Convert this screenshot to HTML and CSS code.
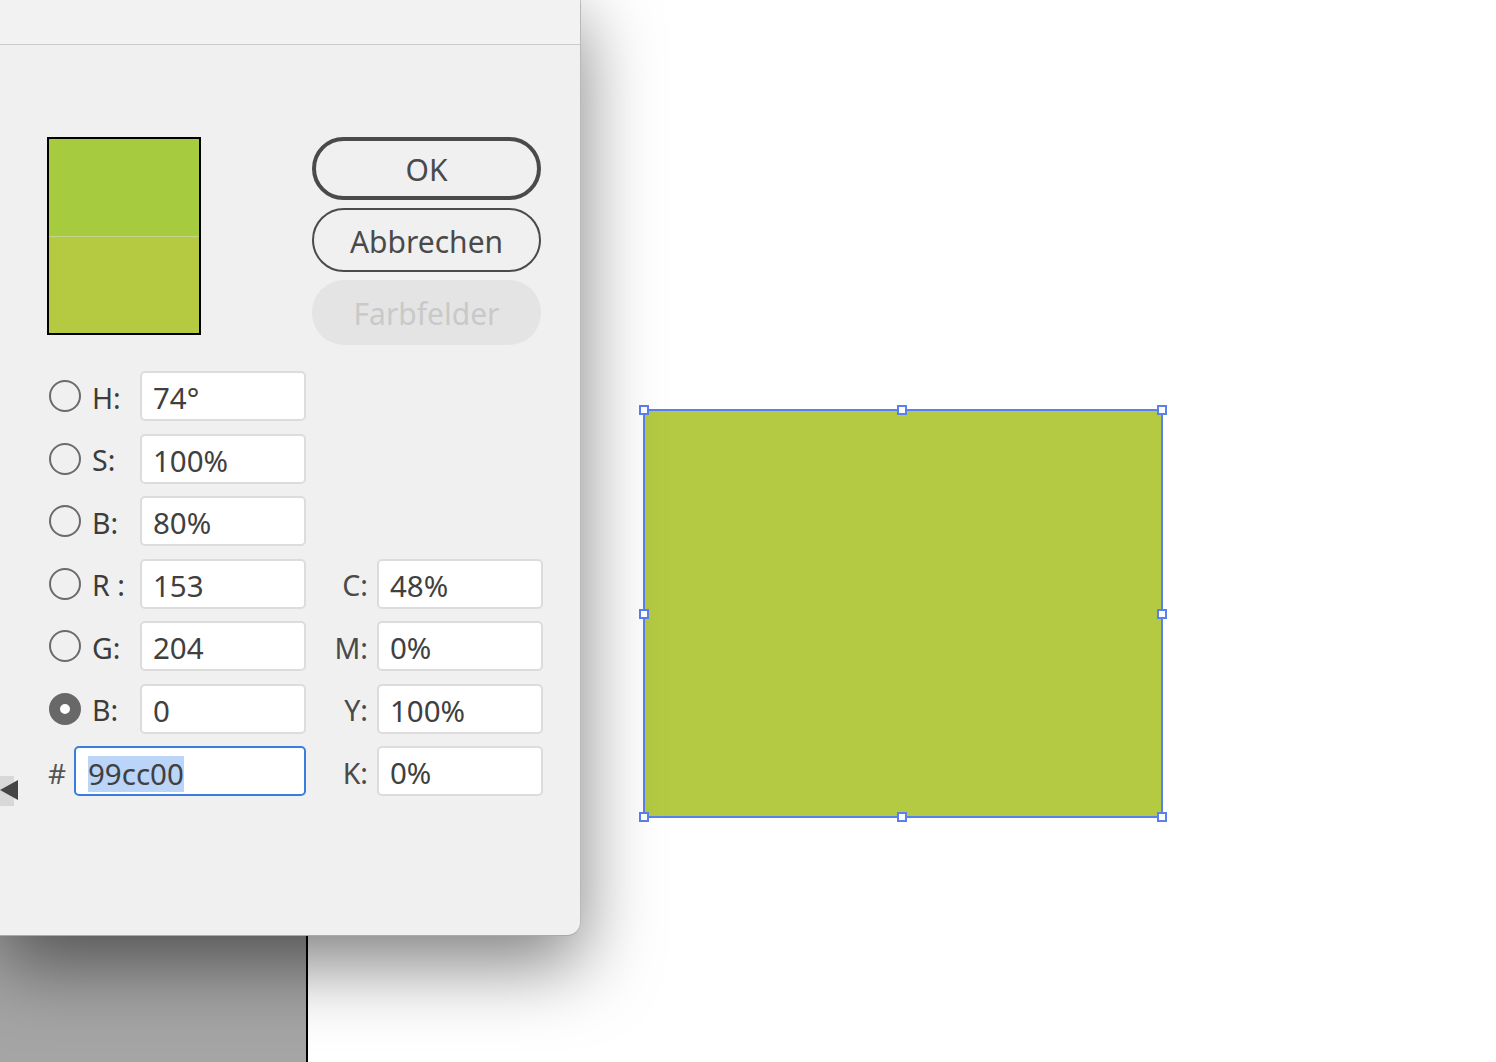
FILE: index.html
```html
<!DOCTYPE html>
<html lang="de">
<head>
<meta charset="utf-8">
<title>Farbwähler</title>
<link rel="stylesheet" href="styles.css">
</head>
<body>
<div class="side-panel"></div>
<div class="canvas">
  <div class="shape">
    <span class="handle h-tl"></span><span class="handle h-tm"></span><span class="handle h-tr"></span>
    <span class="handle h-ml"></span><span class="handle h-mr"></span>
    <span class="handle h-bl"></span><span class="handle h-bm"></span><span class="handle h-br"></span>
  </div>
</div>

<div class="dialog">
  <div class="dialog-header"></div>
  <div class="dialog-body">
    <div class="top-row">
      <div class="swatch">
        <div class="swatch-new"></div>
        <div class="swatch-old"></div>
      </div>
      <div class="buttons">
        <div class="btn btn-default">OK</div>
        <div class="btn">Abbrechen</div>
        <div class="btn btn-disabled">Farbfelder</div>
      </div>
    </div>

    <div class="form">
      <span class="radio"></span><span class="label">H:</span><div class="field">74°</div><span></span><span></span>
      <span class="radio"></span><span class="label">S:</span><div class="field">100%</div><span></span><span></span>
      <span class="radio"></span><span class="label">B:</span><div class="field">80%</div><span></span><span></span>
      <span class="radio"></span><span class="label">R :</span><div class="field">153</div><span class="label2">C:</span><div class="field">48%</div>
      <span class="radio"></span><span class="label">G:</span><div class="field">204</div><span class="label2">M:</span><div class="field">0%</div>
      <span class="radio radio-on"></span><span class="label">B:</span><div class="field">0</div><span class="label2">Y:</span><div class="field">100%</div>
      <div class="hex-row"><span class="hash">#</span><div class="field field-focus"><span class="sel">99cc00</span></div></div><span class="label2">K:</span><div class="field">0%</div>
    </div>
  </div>
  <div class="side-arrow">
    <svg width="18" height="30" viewBox="0 0 18 30"><rect x="0" y="0" width="14" height="30" fill="#d8d8d8"/><path d="M0 14 L18 4 L18 24 Z" fill="#454545"/></svg>
  </div>
</div>
</body>
</html>
```

FILE: styles.css
```css
html, body {
  margin: 0;
  padding: 0;
}
body {
  width: 1496px;
  height: 1062px;
  overflow: hidden;
  display: flex;
  position: relative;
  font-family: "Noto Sans", "Open Sans", sans-serif;
  background: #fff;
}
.side-panel {
  width: 306px;
  flex: none;
  background: #a5a5a5;
  border-right: 2px solid #000;
}
.canvas {
  flex: 1;
  position: relative;
  background: #fff;
}
.shape {
  position: absolute;
  left: 335px;
  top: 409px;
  width: 516px;
  height: 405px;
  background: #b4ca42;
  border: 2px solid #5a80f0;
}
.handle {
  position: absolute;
  width: 6px;
  height: 6px;
  background: #fff;
  border: 2px solid #5a80f0;
}
.h-tl { left: -6px; top: -6px; }
.h-tm { left: 252px; top: -6px; }
.h-tr { right: -6px; top: -6px; }
.h-ml { left: -6px; top: 198px; }
.h-mr { right: -6px; top: 198px; }
.h-bl { left: -6px; bottom: -6px; }
.h-bm { left: 252px; bottom: -6px; }
.h-br { right: -6px; bottom: -6px; }

.dialog {
  position: absolute;
  left: 0;
  top: -10px;
  width: 580px;
  height: 945px;
  background: #f0f0f0;
  border-right: 1px solid #b9b9b9;
  border-bottom: 1px solid #a9a9a9;
  border-radius: 0 14px 14px 0;
  box-shadow: 0 28px 75px rgba(0,0,0,0.5);
}
.dialog-header {
  height: 54px;
  background: #f2f2f2;
  border-bottom: 1px solid #cbcbcb;
  border-radius: 0 14px 0 0;
}
.dialog-body {
  padding: 92px 0 0 47px;
}
.top-row {
  display: flex;
  align-items: flex-start;
}
.swatch {
  width: 154px;
  height: 198px;
  box-sizing: border-box;
  border: 2px solid #000;
  display: flex;
  flex-direction: column;
}
.swatch-new {
  height: 97px;
  background: #a7cb3f;
  border-bottom: 1px solid #c2d68a;
}
.swatch-old {
  flex: 1;
  background: #b5c941;
}
.buttons {
  margin-left: 111px;
  width: 229px;
  display: flex;
  flex-direction: column;
  gap: 8px;
}
.btn {
  height: 64px;
  box-sizing: border-box;
  border: 2px solid #4a4a4a;
  border-radius: 32px;
  display: flex;
  align-items: center;
  justify-content: center;
  padding-top: 2px;
  font-size: 30px;
  color: #4a4a4a;
}
.btn-default {
  height: 63px;
  border-width: 4px;
}
.btn-disabled {
  height: 65px;
  border: none;
  background: #e4e4e4;
  color: #c9c9c9;
}
.form {
  margin-top: 26px;
  display: grid;
  grid-template-columns: 35px 58px 166px 71px 166px;
  grid-auto-rows: 50px;
  row-gap: 12.5px;
  align-items: center;
}
.radio {
  width: 32px;
  height: 32px;
  box-sizing: border-box;
  border: 2px solid #6b6b6b;
  border-radius: 50%;
  margin-left: 2px;
}
.radio-on {
  border: 11px solid #686868;
  background: #fff;
}
.label {
  padding-left: 10px;
  padding-top: 3px;
  font-size: 28.5px;
  color: #3c3c3c;
}
.label2 {
  text-align: right;
  padding-right: 9px;
  padding-top: 3px;
  font-size: 28.5px;
  color: #4a4a4a;
}
.field {
  height: 50px;
  box-sizing: border-box;
  border: 2px solid #dcdcdc;
  border-radius: 5px;
  background: #fff;
  padding-left: 11px;
  padding-top: 2px;
  font-size: 29.5px;
  line-height: 46px;
  color: #404040;
}
.hex-row {
  grid-column: 1 / 4;
  display: flex;
  align-items: center;
}
.hash {
  font-size: 28px;
  color: #555;
  margin-left: 1px;
  padding-top: 3px;
}
.hex-row .field {
  margin-left: auto;
  width: 232px;
  border-color: #3b7ddd;
  padding-left: 12px;
  padding-top: 0;
  line-height: 45px;
}
.sel {
  background: #bad5f7;
  display: inline-block;
  line-height: 36px;
  vertical-align: middle;
}
.side-arrow {
  position: absolute;
  left: 0;
  top: 786px;
  width: 18px;
  height: 30px;
}
.side-arrow svg {
  display: block;
}
```
